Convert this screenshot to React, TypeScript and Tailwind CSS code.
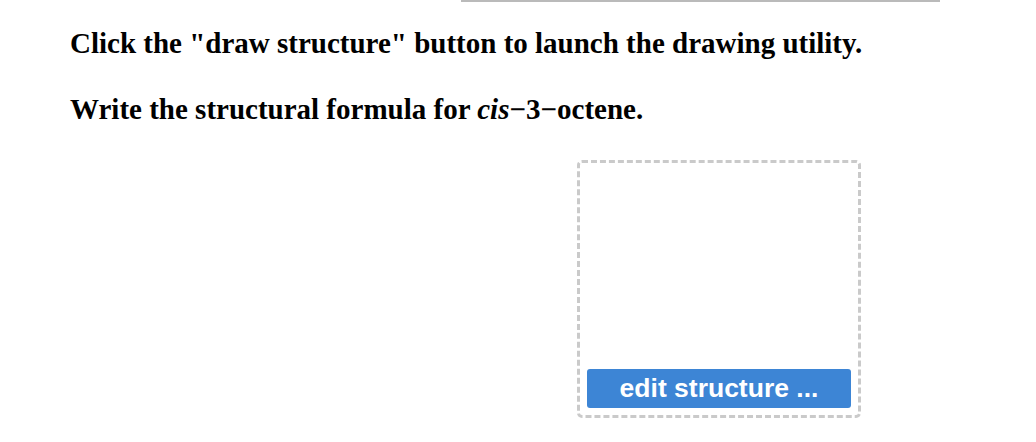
export default function App() {
  return (
    <div className="relative h-[442px] w-[1036px] overflow-hidden bg-white font-['Liberation_Serif','Times_New_Roman',serif] text-black">
      <div className="absolute left-[461px] top-0 h-[2px] w-[479px] bg-[#bababa]" />
      <div className="pl-[70px] pt-[26px]">
        <p className="whitespace-nowrap text-[29px] font-bold leading-[34px]">
          Click the "draw structure" button to launch the drawing utility.
        </p>
        <p className="mt-[32px] whitespace-nowrap text-[29px] font-bold leading-[34px]">
          Write the structural formula for <i>cis</i>−3−octene.
        </p>
      </div>
      <div className="ml-[577px] mt-[34px] flex h-[258px] w-[284px] flex-col justify-end rounded-[5px] border-[3px] border-dashed border-[#cacaca] px-[7px] pb-[7px]">
        <button className="h-[39px] w-full rounded-[3px] bg-[#3d85d5] font-['Liberation_Sans',Arial,sans-serif] text-[26.5px] font-bold leading-none text-white">
          edit structure ...
        </button>
      </div>
    </div>
  );
}
